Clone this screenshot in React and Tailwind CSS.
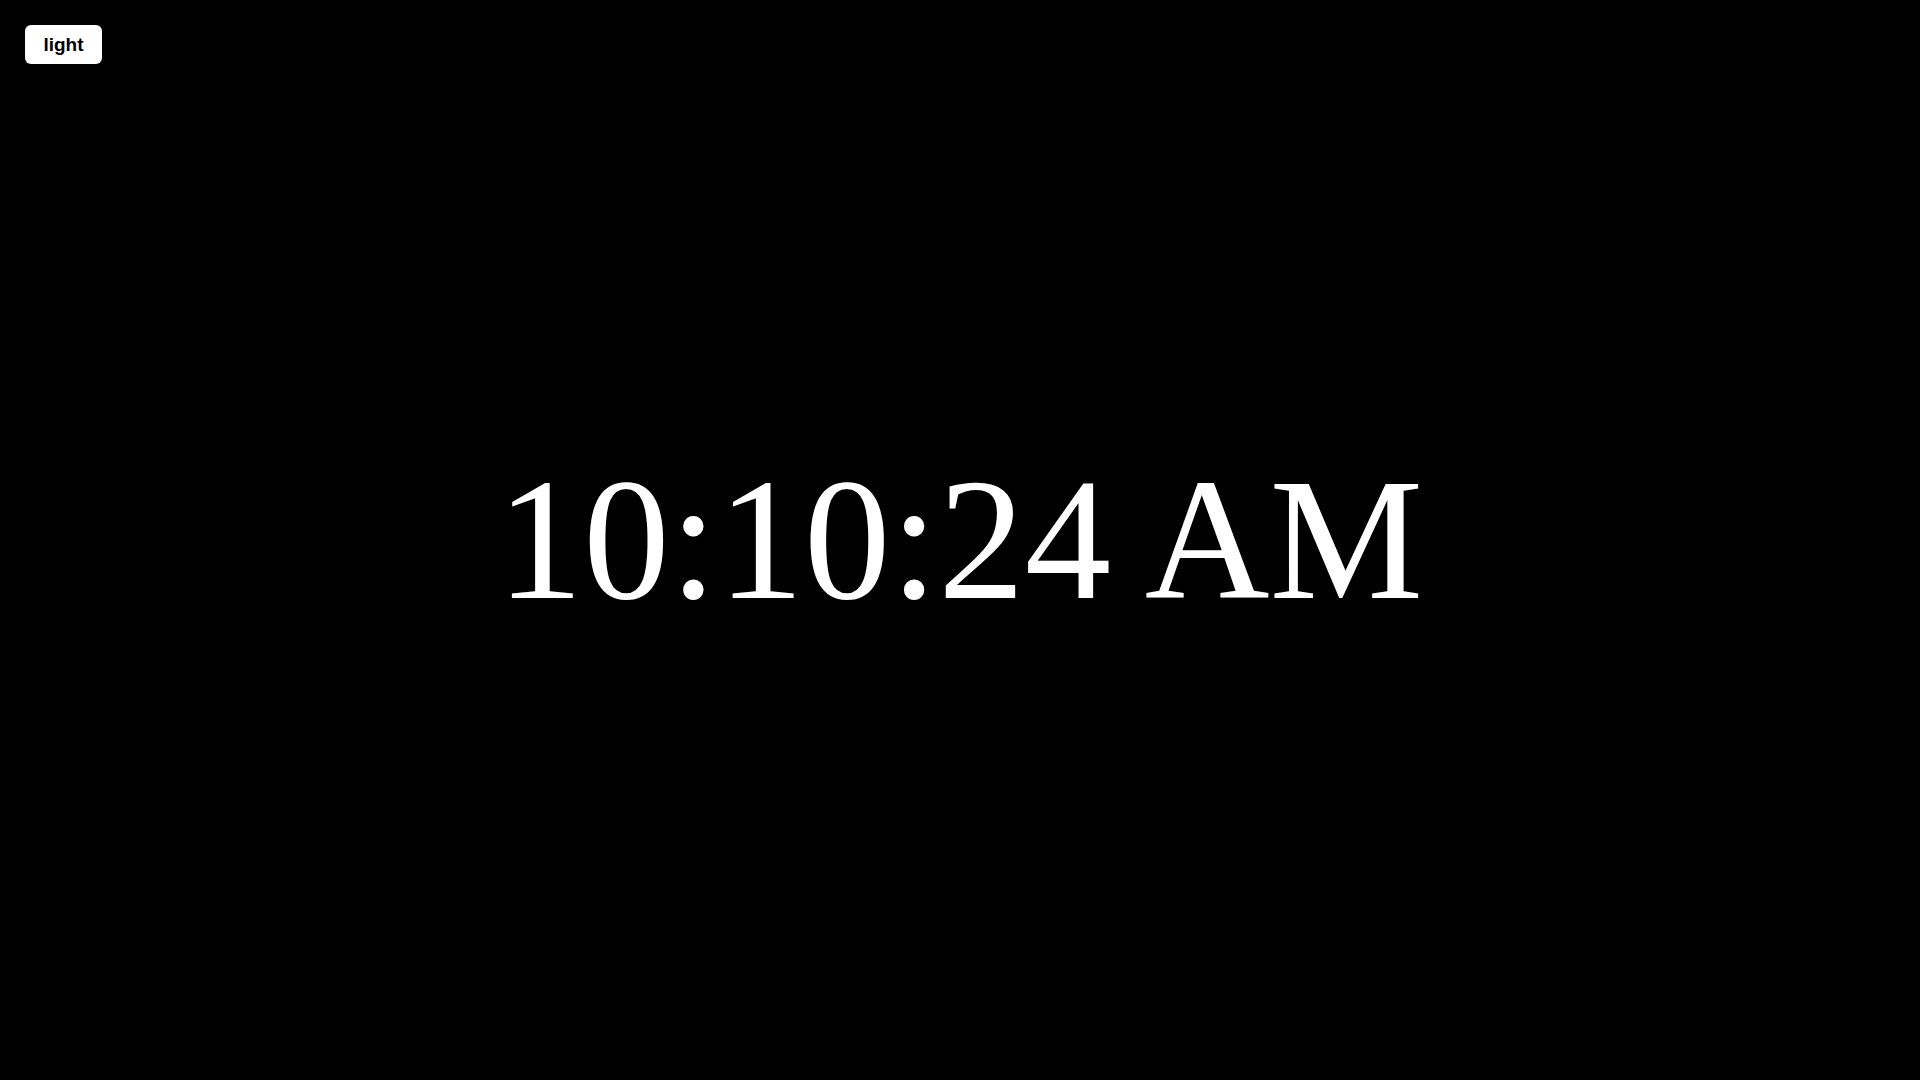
import { useState } from 'react';

const App = () => {
    const [dark, setDark] = useState(true);
    const time = '10:10:24 AM';

    return (
        <div className={`relative h-screen w-full flex items-center justify-center ${dark ? 'bg-black text-white' : 'bg-white text-black'}`}>
            {/* Theme toggle */}
            <button
                onClick={() => setDark(prev => !prev)}
                className={`absolute top-[25px] left-[25px] w-[77px] h-[39px] flex items-center justify-center rounded-[6px] text-[19px] font-bold leading-none font-['Liberation_Sans',Arial,sans-serif] ${dark ? 'bg-white text-black' : 'bg-black text-white'}`}
            >
                {dark ? 'light' : 'dark'}
            </button>

            {/* Clock */}
            <h1 className="text-[9vw] leading-none font-normal font-['Liberation_Serif','Times_New_Roman',serif] whitespace-nowrap">
                {time}
            </h1>
        </div>
    );
};

export default App;
